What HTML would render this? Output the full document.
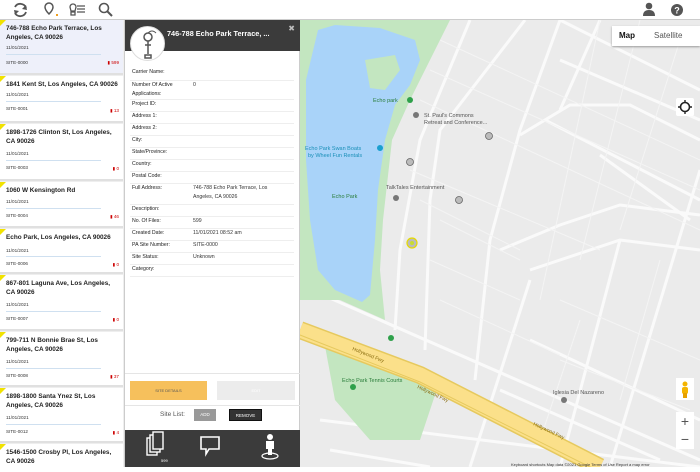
<!DOCTYPE html>
<html><head><meta charset="utf-8"><style>
*{margin:0;padding:0;box-sizing:border-box}
body{width:700px;height:467px;overflow:hidden;position:relative;font-family:"Liberation Sans",sans-serif;background:#fff}
#top{position:absolute;left:0;top:0;width:700px;height:20px;background:#fff;border-bottom:1px solid #ccc;z-index:5}
#list{position:absolute;left:0;top:20px;width:125px;height:447px;background:#eee;overflow:hidden;border-right:1px solid #ccc;z-index:3}
.card{position:absolute;left:0;width:123px;background:#fff;border-bottom:2px solid #e0e0e0}
.card:before{content:"";position:absolute;left:0;top:0;border-top:6px solid #f1e200;border-right:6px solid transparent}
.card .t{position:absolute;left:6px;top:5px;width:112px;font-size:6.4px;font-weight:bold;color:#222;line-height:8.6px}
.card .d{position:absolute;left:6px;font-size:4.6px;color:#333}
.card .ln{position:absolute;left:6px;width:95px;height:1px;background:#cfe0f0}
.card .s{position:absolute;left:6px;font-size:4.6px;color:#333}
.card .f{position:absolute;right:4px;font-size:4.6px;color:#c00}
#det{position:absolute;left:125px;top:20px;width:175px;height:447px;background:#fff;z-index:3;border-right:1px solid #ccc}
#dh{position:absolute;left:0;top:0;width:175px;height:31px;background:#3b3b3b}
#dh .ttl{position:absolute;left:42px;top:9px;color:#fff;font-size:7.3px;font-weight:bold}
#av{position:absolute;left:5px;top:6px;width:35px;height:35px;border-radius:50%;background:#fff;border:1px solid #ddd;overflow:hidden}
.row{position:absolute;left:5px;width:164px;border-bottom:1px solid #eee;font-size:5.2px;color:#333;line-height:8.5px}
.row b{font-weight:normal;color:#222;position:absolute;left:2px}
.row span{position:absolute;left:63px}
.btn{position:absolute;font-size:4px;text-align:center;line-height:19px}
#bot{position:absolute;left:0;top:410px;width:175px;height:37px;background:#3b3b3b}
#map{position:absolute;left:0;top:20px;width:700px;height:447px;z-index:1}
.ic{position:absolute;top:3px}
</style></head><body>
<div id="top">
<svg width="700" height="20" style="position:absolute;left:0;top:0">
<g fill="none" stroke="#555" stroke-width="1.8">
<path d="M15,7 A6,6 0 0 1 26,8"/><path d="M15,13 A6,6 0 0 0 26,12"/>
</g>
<path d="M26,5 L27,10 L22,9Z M15,15 L14,10 L19,11Z" fill="#555"/>
<path d="M49,3 a4,4 0 0 1 4,4 c0,3 -4,7 -4,7 c0,0 -4,-4 -4,-7 a4,4 0 0 1 4,-4z" fill="none" stroke="#555" stroke-width="1.5"/>
<rect x="56" y="14" width="2" height="2" fill="#f0a020"/>
<path d="M73,4 a3,3 0 0 1 3,3 l-1,4 h-4 l-1,-4 a3,3 0 0 1 3,-3z M71,12h4v3h-4z" fill="none" stroke="#555" stroke-width="1.3"/>
<path d="M77,6h8 M77,9h8 M77,12h8" stroke="#555" stroke-width="1.3"/>
<circle cx="104" cy="8" r="4.5" fill="none" stroke="#555" stroke-width="1.6"/><path d="M107,11 L112,16" stroke="#555" stroke-width="2"/>
<circle cx="649" cy="6" r="3.3" fill="#555"/><path d="M643,16 q0,-6 6,-6 q6,0 6,6z" fill="#555"/>
<circle cx="677" cy="10" r="6" fill="#555"/><text x="677" y="13.5" font-size="9" font-weight="bold" fill="#fff" text-anchor="middle" font-family="Liberation Sans">?</text>
</svg>
</div>

<div id="map">
<svg width="700" height="447" viewBox="0 20 700 447" style="position:absolute;left:0;top:0">
<rect x="0" y="20" width="700" height="447" fill="#ebebeb"/>
<g stroke="#fafafa" stroke-width="3" fill="none">
<path d="M470,20 L420,140 L400,250 L395,330"/>
<path d="M300,285 L700,460"/>
<path d="M525,20 L440,130 L430,200 L425,350"/>
<path d="M560,20 L520,130 L490,240 L475,380"/>
<path d="M520,135 L570,105 L630,105 L700,140"/>
<path d="M500,250 L560,225 L620,205 L700,215"/>
<path d="M530,270 L620,240 L700,250"/>
<path d="M560,20 L700,90"/>
<path d="M560,60 L700,120"/>
<path d="M545,120 L700,200"/>
<path d="M600,155 L690,220"/>
<path d="M530,280 L470,467"/>
<path d="M620,240 L560,467"/>
<path d="M700,170 L610,467"/>
<path d="M530,340 L700,420"/>
<path d="M500,390 L660,460"/>
<path d="M320,420 L700,467"/>
<path d="M330,450 L430,467"/>
<path d="M560,110 L600,20"/>
</g>
<g stroke="#f4f4f4" stroke-width="1" fill="none">
<path d="M440,40 L700,160 M430,70 L700,190 M420,100 L700,230 M410,170 L600,250 M420,200 L520,250 M440,220 L520,260 M430,260 L520,300 M560,300 L700,360 M560,360 L690,410 M440,300 L560,355"/>
<path d="M600,20 L540,300 M640,20 L580,260 M680,40 L620,230 M660,260 L620,400 M580,320 L540,440"/>
</g>
<path d="M300,20 L450,20 L410,100 L392,140 L383,220 L380,270 L385,320 L340,300 L300,300Z" fill="#c3e6c0"/>
<path d="M322,330 L440,380 L420,440 L370,440 L335,400Z" fill="#c3e6c0"/>
<path d="M318,30 L335,25 L380,28 L415,40 L420,60 L410,85 L395,105 L385,140 L378,190 L375,240 L370,295 L362,302 L335,290 L318,270 L310,220 L306,160 L306,80Z" fill="#a9d3f9"/>
<path d="M365,60 L395,55 L400,70 L385,90 L370,88Z" fill="#c3e6c0"/>
<g stroke="#e6c95e" stroke-width="18" fill="none"><path d="M300,330 L420,375 L600,467"/></g>
<g stroke="#fbe08a" stroke-width="15" fill="none"><path d="M300,330 L420,375 L600,467"/></g>
<path d="M300,335 L420,382 L600,472" stroke="#e6c95e" stroke-width="1" fill="none"/>
<g font-family="Liberation Sans" font-size="5.5" fill="#2a7d3a">
<text x="373" y="102">Echo park</text>
<text x="305" y="150" fill="#1a8fb8">Echo Park Swan Boats</text>
<text x="308" y="157" fill="#1a8fb8">by Wheel Fun Rentals</text>
<text x="332" y="198">Echo Park</text>
<text x="342" y="382">Echo Park Tennis Courts</text>
</g>
<g font-family="Liberation Sans" font-size="5.5" fill="#555">
<text x="424" y="117">St. Paul's Commons</text>
<text x="424" y="124">Retreat and Conference...</text>
<text x="386" y="189">TalkTales Entertainment</text>
<text x="553" y="394">Iglesia Del Nazareno</text>
</g>
<g font-family="Liberation Sans" font-size="5" fill="#8a6d10">
<text x="352" y="350" transform="rotate(22 352 350)">Hollywood Fwy</text>
<text x="417" y="388" transform="rotate(25 417 388)">Hollywood Fwy</text>
<text x="533" y="425" transform="rotate(25 533 425)">Hollywood Fwy</text>
</g>
<circle cx="410" cy="100" r="3" fill="#2ea04a"/><circle cx="380" cy="148" r="3" fill="#1a9fcf"/>
<circle cx="396" cy="198" r="3" fill="#777"/><circle cx="391" cy="338" r="3" fill="#2ea04a"/><circle cx="353" cy="387" r="3" fill="#2ea04a"/>
<circle cx="416" cy="115" r="3" fill="#777"/><circle cx="564" cy="400" r="3" fill="#777"/>
<g fill="#bbb" stroke="#666" stroke-width="0.8"><circle cx="489" cy="136" r="3.5"/><circle cx="410" cy="162" r="3.5"/><circle cx="459" cy="200" r="3.5"/></g>
<circle cx="412" cy="243" r="5" fill="#bbb" stroke="#e5d900" stroke-width="1.2"/><circle cx="412" cy="243" r="2" fill="#c8dc30"/>
<g font-family="Liberation Sans" font-size="4" fill="#333"><text x="511" y="466">Keyboard shortcuts    Map data ©2021 Google   Terms of Use   Report a map error</text></g>
</svg>
<div style="position:absolute;left:612px;top:6px;width:88px;height:20px;background:#fff;box-shadow:0 1px 2px #999;font-size:8px;line-height:20px">
<span style="position:absolute;left:7px;font-weight:bold;color:#111">Map</span><span style="position:absolute;left:42px;color:#555">Satellite</span></div>
<div style="position:absolute;left:676px;top:78px;width:18px;height:18px;background:#fff;border-radius:2px"><svg width="18" height="18"><circle cx="9" cy="9" r="4.5" fill="none" stroke="#222" stroke-width="1.6"/><path d="M9,2v3M9,13v3M2,9h3M13,9h3" stroke="#222" stroke-width="1.4"/></svg></div>
<div style="position:absolute;left:676px;top:358px;width:18px;height:22px;background:#fff"><svg width="18" height="22"><circle cx="9" cy="6" r="2.5" fill="#f4b400"/><rect x="6" y="9" width="6" height="7" rx="2" fill="#f4b400"/><rect x="7" y="15" width="4" height="5" fill="#e6a000"/></svg></div>
<div style="position:absolute;left:676px;top:392px;width:18px;height:37px;background:#fff;font-size:14px;color:#555;text-align:center;line-height:18px">+<br>−</div>
</div>

<div id="list">
<div class="card" style="top:0;height:55px;background:#eef0fa"><div class="t">746-788 Echo Park Terrace, Los Angeles, CA 90026</div><div class="d" style="top:25px">11/01/2021</div><div class="ln" style="top:34px"></div><div class="s" style="top:40px">SITE-0000</div><div class="f" style="top:40px">▮ 599</div></div>
<div class="card" style="top:56px;height:47px"><div class="t">1841 Kent St, Los Angeles, CA 90026</div><div class="d" style="top:16px">11/01/2021</div><div class="ln" style="top:25px"></div><div class="s" style="top:30px">SITE-0001</div><div class="f" style="top:32px">▮ 13</div></div>
<div class="card" style="top:104px;height:57px"><div class="t">1898-1726 Clinton St, Los Angeles, CA 90026</div><div class="d" style="top:27px">11/01/2021</div><div class="ln" style="top:36px"></div><div class="s" style="top:41px">SITE-0003</div><div class="f" style="top:42px">▮ 0</div></div>
<div class="card" style="top:162px;height:46px"><div class="t">1060 W Kensington Rd</div><div class="d" style="top:17px">11/01/2021</div><div class="ln" style="top:26px"></div><div class="s" style="top:31px">SITE-0004</div><div class="f" style="top:32px">▮ 46</div></div>
<div class="card" style="top:209px;height:45px"><div class="t">Echo Park, Los Angeles, CA 90026</div><div class="d" style="top:19px">11/01/2021</div><div class="ln" style="top:27px"></div><div class="s" style="top:32px">SITE-0006</div><div class="f" style="top:33px">▮ 0</div></div>
<div class="card" style="top:255px;height:56px"><div class="t">867-801 Laguna Ave, Los Angeles, CA 90026</div><div class="d" style="top:27px">11/01/2021</div><div class="ln" style="top:36px"></div><div class="s" style="top:41px">SITE-0007</div><div class="f" style="top:42px">▮ 0</div></div>
<div class="card" style="top:312px;height:55px"><div class="t">799-711 N Bonnie Brae St, Los Angeles, CA 90026</div><div class="d" style="top:27px">11/01/2021</div><div class="ln" style="top:36px"></div><div class="s" style="top:41px">SITE-0008</div><div class="f" style="top:42px">▮ 37</div></div>
<div class="card" style="top:368px;height:55px"><div class="t">1898-1800 Santa Ynez St, Los Angeles, CA 90026</div><div class="d" style="top:27px">11/01/2021</div><div class="ln" style="top:36px"></div><div class="s" style="top:41px">SITE-0012</div><div class="f" style="top:42px">▮ 4</div></div>
<div class="card" style="top:424px;height:40px"><div class="t">1546-1500 Crosby Pl, Los Angeles, CA 90026</div></div>
</div>

<div id="det">
<div id="dh"><div class="ttl">746-788 Echo Park Terrace, ...</div><div style="position:absolute;right:5px;top:4px;color:#bbb;font-size:8px">✖</div></div>
<div id="av"><svg width="35" height="35"><circle cx="17" cy="10" r="4" fill="none" stroke="#555" stroke-width="1.5"/><path d="M17,6 q4,-4 8,0" stroke="#555" fill="none"/><path d="M17,14 v13 M14,18 h6 M14,28 h6 v3 h-6z" stroke="#555" stroke-width="1.5" fill="none"/></svg></div>
<div class="row" style="top:48px;height:13px"><b>Carrier Name:</b></div>
<div class="row" style="top:61px;height:19px"><b>Number Of Active<br>Applications:</b><span>0</span></div>
<div class="row" style="top:80px;height:12px"><b>Project ID:</b></div>
<div class="row" style="top:92px;height:12px"><b>Address 1:</b></div>
<div class="row" style="top:104px;height:12px"><b>Address 2:</b></div>
<div class="row" style="top:116px;height:12px"><b>City:</b></div>
<div class="row" style="top:128px;height:12px"><b>State/Province:</b></div>
<div class="row" style="top:140px;height:12px"><b>Country:</b></div>
<div class="row" style="top:152px;height:12px"><b>Postal Code:</b></div>
<div class="row" style="top:164px;height:21px"><b>Full Address:</b><span>746-788 Echo Park Terrace, Los<br>Angeles, CA 90026</span></div>
<div class="row" style="top:185px;height:12px"><b>Description:</b></div>
<div class="row" style="top:197px;height:12px"><b>No. Of Files:</b><span>599</span></div>
<div class="row" style="top:209px;height:12px"><b>Created Date:</b><span>11/01/2021 08:52 am</span></div>
<div class="row" style="top:221px;height:12px"><b>PA Site Number:</b><span>SITE-0000</span></div>
<div class="row" style="top:233px;height:12px"><b>Site Status:</b><span>Unknown</span></div>
<div class="row" style="top:245px;height:12px"><b>Category:</b></div>
<div style="position:absolute;left:0;top:353px;width:175px;height:1px;background:#e5e5e5"></div>
<div class="btn" style="left:5px;top:361px;width:77px;height:19px;background:#f6c05c;color:#555">SITE DETAILS</div>
<div class="btn" style="left:92px;top:361px;width:78px;height:19px;background:#ececec;color:#fff">EDIT</div>
<div style="position:absolute;left:0;top:385px;width:175px;height:1px;background:#e5e5e5"></div>
<div style="position:absolute;left:35px;top:391px;font-size:6.5px;color:#555">Site List:</div>
<div class="btn" style="left:69px;top:389px;width:22px;height:12px;line-height:12px;background:#999;color:#fff;font-size:4.5px">ADD</div>
<div class="btn" style="left:104px;top:389px;width:33px;height:12px;line-height:12px;background:#333;color:#fff;font-size:4.5px;border:1px solid #111">REMOVE</div>
<div id="bot"><svg width="175" height="37">
<g fill="#3b3b3b" stroke="#fff" stroke-width="1.4"><rect x="22" y="8" width="10" height="17"/><rect x="25" y="5" width="10" height="17"/><rect x="28" y="2" width="10" height="17"/></g>
<text x="36" y="32" font-size="4" fill="#fff" font-family="Liberation Sans">599</text>
<path d="M76,7 h18 v12 h-10 l-3,5 v-5 h-5z" fill="none" stroke="#fff" stroke-width="1.6"/>
<circle cx="145" cy="7" r="3" fill="#fff"/><path d="M141,11 h8 v8 h-2 v6 h-4 v-6 h-2z" fill="#fff"/>
<ellipse cx="145" cy="26" rx="8" ry="3" fill="none" stroke="#fff" stroke-width="1.2"/>
</svg></div>
</div>
</body></html>
